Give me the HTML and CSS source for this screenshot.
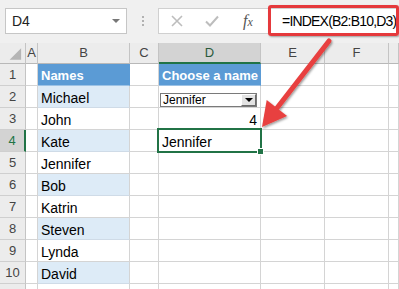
FILE: index.html
```html
<!DOCTYPE html>
<html>
<head>
<meta charset="utf-8">
<link rel="stylesheet" href="styles.css">
</head>
<body>
<div class="app">
  <div class="toolbar">
    <div class="namebox"><span>D4</span><span class="caret"></span></div>
    <div class="grip"><svg width="4" height="12" viewBox="0 0 4 12"><circle cx="2" cy="2" r="1" fill="#9c9c9c"/><circle cx="2" cy="6" r="1" fill="#9c9c9c"/><circle cx="2" cy="10" r="1" fill="#9c9c9c"/></svg></div>
    <div class="formula">
      <div class="fb"><svg width="12" height="12" viewBox="0 0 12 12"><path d="M1 1 L11 11 M11 1 L1 11" stroke="#bdbdbd" stroke-width="1.6" fill="none"/></svg></div>
      <div class="fb"><svg width="14" height="12" viewBox="0 0 14 12"><path d="M1 6.5 L5 10.5 L13 1.5" stroke="#bdbdbd" stroke-width="2" fill="none"/></svg></div>
      <div class="fb"><span class="fx">f<span class="fxx">x</span></span></div>
      <div class="ftext">=INDEX(B2:B10,D3)</div>
    </div>
  </div>
  <div class="grid">
    <div class="c h corner"><svg width="26" height="21" viewBox="0 0 26 21"><polygon points="22,5 22,17 10,17" fill="#b5b5b5"/></svg></div>
    <div class="c h">A</div><div class="c h">B</div><div class="c h">C</div><div class="c h hsel">D</div><div class="c h">E</div><div class="c h">F</div><div class="c h"></div>

    <div class="c rh">1</div><div class="c"></div><div class="c blue">Names</div><div class="c"></div><div class="c blue">Choose a name</div><div class="c"></div><div class="c"></div><div class="c"></div>
    <div class="c rh">2</div><div class="c"></div><div class="c lb">Michael</div><div class="c"></div><div class="c cbcell"><div class="combo"><span>Jennifer</span><span class="cbtn"><span class="tri"></span></span></div></div><div class="c"></div><div class="c"></div><div class="c"></div>
    <div class="c rh">3</div><div class="c"></div><div class="c">John</div><div class="c"></div><div class="c num">4</div><div class="c"></div><div class="c"></div><div class="c"></div>
    <div class="c rh rsel">4</div><div class="c"></div><div class="c lb">Kate</div><div class="c"></div><div class="c sel"><span>Jennifer</span></div><div class="c"></div><div class="c"></div><div class="c"></div>
    <div class="c rh">5</div><div class="c"></div><div class="c">Jennifer</div><div class="c"></div><div class="c"></div><div class="c"></div><div class="c"></div><div class="c"></div>
    <div class="c rh">6</div><div class="c"></div><div class="c lb">Bob</div><div class="c"></div><div class="c"></div><div class="c"></div><div class="c"></div><div class="c"></div>
    <div class="c rh">7</div><div class="c"></div><div class="c">Katrin</div><div class="c"></div><div class="c"></div><div class="c"></div><div class="c"></div><div class="c"></div>
    <div class="c rh">8</div><div class="c"></div><div class="c lb">Steven</div><div class="c"></div><div class="c"></div><div class="c"></div><div class="c"></div><div class="c"></div>
    <div class="c rh">9</div><div class="c"></div><div class="c">Lynda</div><div class="c"></div><div class="c"></div><div class="c"></div><div class="c"></div><div class="c"></div>
    <div class="c rh">10</div><div class="c"></div><div class="c lb">David</div><div class="c"></div><div class="c"></div><div class="c"></div><div class="c"></div><div class="c"></div>
    <div class="c rh"></div><div class="c"></div><div class="c"></div><div class="c"></div><div class="c"></div><div class="c"></div><div class="c"></div><div class="c"></div>
  </div>
  <div class="callout"></div>
  <svg class="arrow" width="399" height="289" viewBox="0 0 399 289">
    <defs>
      <filter id="sh" x="-20%" y="-20%" width="140%" height="140%">
        <feDropShadow dx="1" dy="1.5" stdDeviation="1" flood-color="#000" flood-opacity="0.4"/>
      </filter>
    </defs>
    <g filter="url(#sh)">
      <line x1="329" y1="41" x2="277" y2="108" stroke="#e8413f" stroke-width="5" stroke-linecap="round"/>
      <polygon points="262,127 266.7,100.1 287.1,116.1" fill="#e8413f"/>
    </g>
  </svg>
</div>
</body>
</html>
```

FILE: styles.css
```css
html, body {
  margin: 0;
  padding: 0;
  background: #ffffff;
}
body {
  font-family: "Liberation Sans", Arial, sans-serif;
  overflow: hidden;
}
.app {
  position: relative;
  width: 399px;
  height: 289px;
  overflow: hidden;
}
.toolbar {
  height: 43px;
  box-sizing: border-box;
  padding: 8px 0 0 5px;
  background: #f0f0f0;
  display: flex;
  align-items: flex-start;
}
.namebox {
  width: 122px;
  height: 26px;
  box-sizing: border-box;
  background: #fff;
  border: 1px solid #c6c6c6;
  display: flex;
  align-items: center;
  padding: 0 6px 0 6px;
  font-size: 14px;
  color: #222;
}
.namebox .caret {
  margin-left: auto;
  width: 0;
  height: 0;
  border-left: 4px solid transparent;
  border-right: 4px solid transparent;
  border-top: 4px solid #777;
  margin-right: 0;
}
.grip {
  width: 31px;
  height: 26px;
  display: flex;
  align-items: center;
  justify-content: center;
}
.formula {
  flex: 1;
  height: 26px;
  box-sizing: border-box;
  background: #fff;
  border: 1px solid #d0d0d0;
  border-right: none;
  display: flex;
  align-items: center;
  min-width: 0;
}
.fb {
  width: 36px;
  flex: none;
  display: flex;
  justify-content: center;
  align-items: center;
}
.fb:first-child {
  width: 35px;
}
.fx {
  font-family: "Liberation Serif", "Times New Roman", serif;
  font-style: italic;
  font-size: 16px;
  color: #555;
}
.fxx {
  font-size: 12px;
}
.ftext {
  padding-left: 16px;
  font-size: 14px;
  letter-spacing: -0.8px;
  color: #000;
  white-space: nowrap;
}
.grid {
  display: grid;
  grid-template-columns: 26px 12px 92px 29px 102px 64px 64px 1fr;
  grid-template-rows: 21px repeat(11, 22px);
}
.c {
  box-sizing: border-box;
  border-right: 1px solid #d4d4d4;
  border-bottom: 1px solid #d4d4d4;
  display: flex;
  align-items: flex-end;
  padding: 0 3px 1px 3px;
  font-size: 14px;
  line-height: 16px;
  color: #000;
  white-space: nowrap;
  min-width: 0;
}
.h {
  background: #ececec;
  border-right-color: #c4c4c4;
  border-bottom-color: #b8b8b8;
  justify-content: center;
  align-items: center;
  padding: 0;
  font-size: 13px;
  color: #444;
}
.corner {
  padding: 0;
  align-items: stretch;
  justify-content: stretch;
}
.corner svg {
  display: block;
}
.hsel {
  background: #d3d3d3;
  border-bottom: 2px solid #217346;
  color: #2a5a3b;
}
.rh {
  background: #ececec;
  border-right-color: #c4c4c4;
  border-bottom-color: #cfcfcf;
  justify-content: center;
  align-items: center;
  padding: 0;
  font-size: 13px;
  color: #444;
}
.rsel {
  background: #d3d3d3;
  border-right: 2px solid #217346;
  color: #217346;
}
.blue {
  background: #5b9bd5;
  border-right-color: #5b9bd5;
  border-bottom-color: #9cc2e5;
  color: #fff;
  font-weight: bold;
  font-size: 13px;
}
.lb {
  background: #ddebf7;
  border-bottom-color: #cfdbe7;
}
.num {
  justify-content: flex-end;
}
.cbcell {
  align-items: flex-start;
  padding: 7px 0 0 1px;
}
.combo {
  width: 97px;
  height: 14px;
  box-sizing: border-box;
  border: 1px solid #7a7a7a;
  background: #fff;
  display: flex;
  align-items: center;
  padding-left: 2px;
  font-size: 12px;
  line-height: 12px;
}
.cbtn {
  margin-left: auto;
  width: 15px;
  height: 12px;
  box-sizing: border-box;
  background: #e3e3e3;
  border: 1px solid;
  border-color: #ffffff #6b6b6b #6b6b6b #ffffff;
  display: flex;
  align-items: center;
  justify-content: center;
}
.tri {
  width: 0;
  height: 0;
  border-left: 4px solid transparent;
  border-right: 4px solid transparent;
  border-top: 4px solid #000;
}
.sel {
  position: relative;
  z-index: 2;
}
.sel::before {
  content: "";
  position: absolute;
  left: -2px;
  top: -2px;
  width: 105px;
  height: 25px;
  box-sizing: border-box;
  border: 2px solid #217346;
}
.sel::after {
  content: "";
  position: absolute;
  left: 98px;
  top: 18px;
  width: 5px;
  height: 5px;
  background: #217346;
  border: 1px solid #fff;
}
.callout {
  position: absolute;
  left: 268px;
  top: 5px;
  width: 131px;
  height: 31px;
  box-sizing: border-box;
  border: 3px solid #e5393c;
  border-radius: 3px;
  box-shadow: 1px 1px 2px rgba(0, 0, 0, 0.35);
}
.arrow {
  position: absolute;
  left: 0;
  top: 0;
  pointer-events: none;
}
```
